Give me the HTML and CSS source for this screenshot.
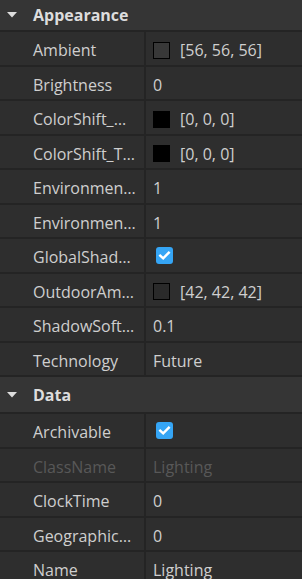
FILE: index.html
```html
<!DOCTYPE html>
<html lang="en">
<head>
    <meta charset="UTF-8">
    <meta name="viewport" content="width=device-width, initial-scale=1.0">
    <title>Properties</title>
    <link rel="stylesheet" href="styles.css">
</head>
<body>
    <div class="props">
        <div class="group first">
            <svg class="arrow" viewBox="0 0 10 6"><polygon points="0,0 10,0 5,5.5"/></svg>
            <span>Appearance</span>
        </div>
        <div class="row"><div class="name">Ambient</div><div class="value"><i class="swatch" style="background: rgb(56,56,56);"></i>[56, 56, 56]</div></div>
        <div class="row"><div class="name">Brightness</div><div class="value">0</div></div>
        <div class="row"><div class="name">ColorShift_Bottom</div><div class="value"><i class="swatch" style="background: rgb(0,0,0);"></i>[0, 0, 0]</div></div>
        <div class="row"><div class="name">ColorShift_Top</div><div class="value"><i class="swatch" style="background: rgb(0,0,0);"></i>[0, 0, 0]</div></div>
        <div class="row"><div class="name">EnvironmentDiffuseScale</div><div class="value">1</div></div>
        <div class="row"><div class="name">EnvironmentSpecularScale</div><div class="value">1</div></div>
        <div class="row"><div class="name">GlobalShadows</div><div class="value"><span class="check"><svg viewBox="0 0 18 18"><path d="M4.5 9.2 L7.6 12 L13.5 6"/></svg></span></div></div>
        <div class="row"><div class="name">OutdoorAmbient</div><div class="value"><i class="swatch" style="background: rgb(42,42,42);"></i>[42, 42, 42]</div></div>
        <div class="row"><div class="name">ShadowSoftness</div><div class="value">0.1</div></div>
        <div class="row"><div class="name">Technology</div><div class="value">Future</div></div>

        <div class="group">
            <svg class="arrow" viewBox="0 0 10 6"><polygon points="0,0 10,0 5,5.5"/></svg>
            <span>Data</span>
        </div>
        <div class="row"><div class="name">Archivable</div><div class="value"><span class="check"><svg viewBox="0 0 18 18"><path d="M4.5 9.2 L7.6 12 L13.5 6"/></svg></span></div></div>
        <div class="row disabled"><div class="name">ClassName</div><div class="value">Lighting</div></div>
        <div class="row"><div class="name">ClockTime</div><div class="value">0</div></div>
        <div class="row"><div class="name">GeographicLatitude</div><div class="value">0</div></div>
        <div class="row"><div class="name">Name</div><div class="value">Lighting</div></div>
    </div>
</body>
</html>
```

FILE: styles.css
```css
body {
    margin: 0;
    background-color: #2e2e2e;
    color: #cfcfcf;
    font-family: "Open Sans", Arial, sans-serif;
    font-size: 16px;
    overflow: hidden;
}
.props {
    display: flex;
    flex-direction: column;
}
.group {
    display: flex;
    align-items: center;
    height: 35px;
    border-bottom: 2px solid #242424;
    background-color: #353535;
    color: #dddddd;
    font-weight: bold;
}
.group.first {
    height: 30px;
}
.group .arrow {
    width: 10px;
    height: 6px;
    margin: 0 16px 0 7px;
    fill: #dddddd;
}
.row {
    display: flex;
    height: 32.5px;
    border-bottom: 2px solid #242424;
}
.name {
    width: 146px;
    box-sizing: border-box;
    padding: 2px 8px 0 33px;
    line-height: 32px;
    white-space: nowrap;
    overflow: hidden;
    text-overflow: ellipsis;
    border-right: 2px solid #242424;
}
.value {
    flex: 1;
    display: flex;
    align-items: center;
    padding: 4px 0 0 7px;
    white-space: nowrap;
}
.disabled {
    color: #585858;
}
.swatch {
    width: 15px;
    height: 15px;
    border: 1.5px solid #000000;
    margin-right: 10px;
}
.check {
    display: flex;
    width: 17px;
    height: 17px;
    margin: -4px 0 0 3px;
    border-radius: 3px;
    background-color: #35a5f5;
}
.check svg {
    width: 17px;
    height: 17px;
    fill: none;
    stroke: #ffffff;
    stroke-width: 2.6;
    stroke-linecap: square;
}
```
